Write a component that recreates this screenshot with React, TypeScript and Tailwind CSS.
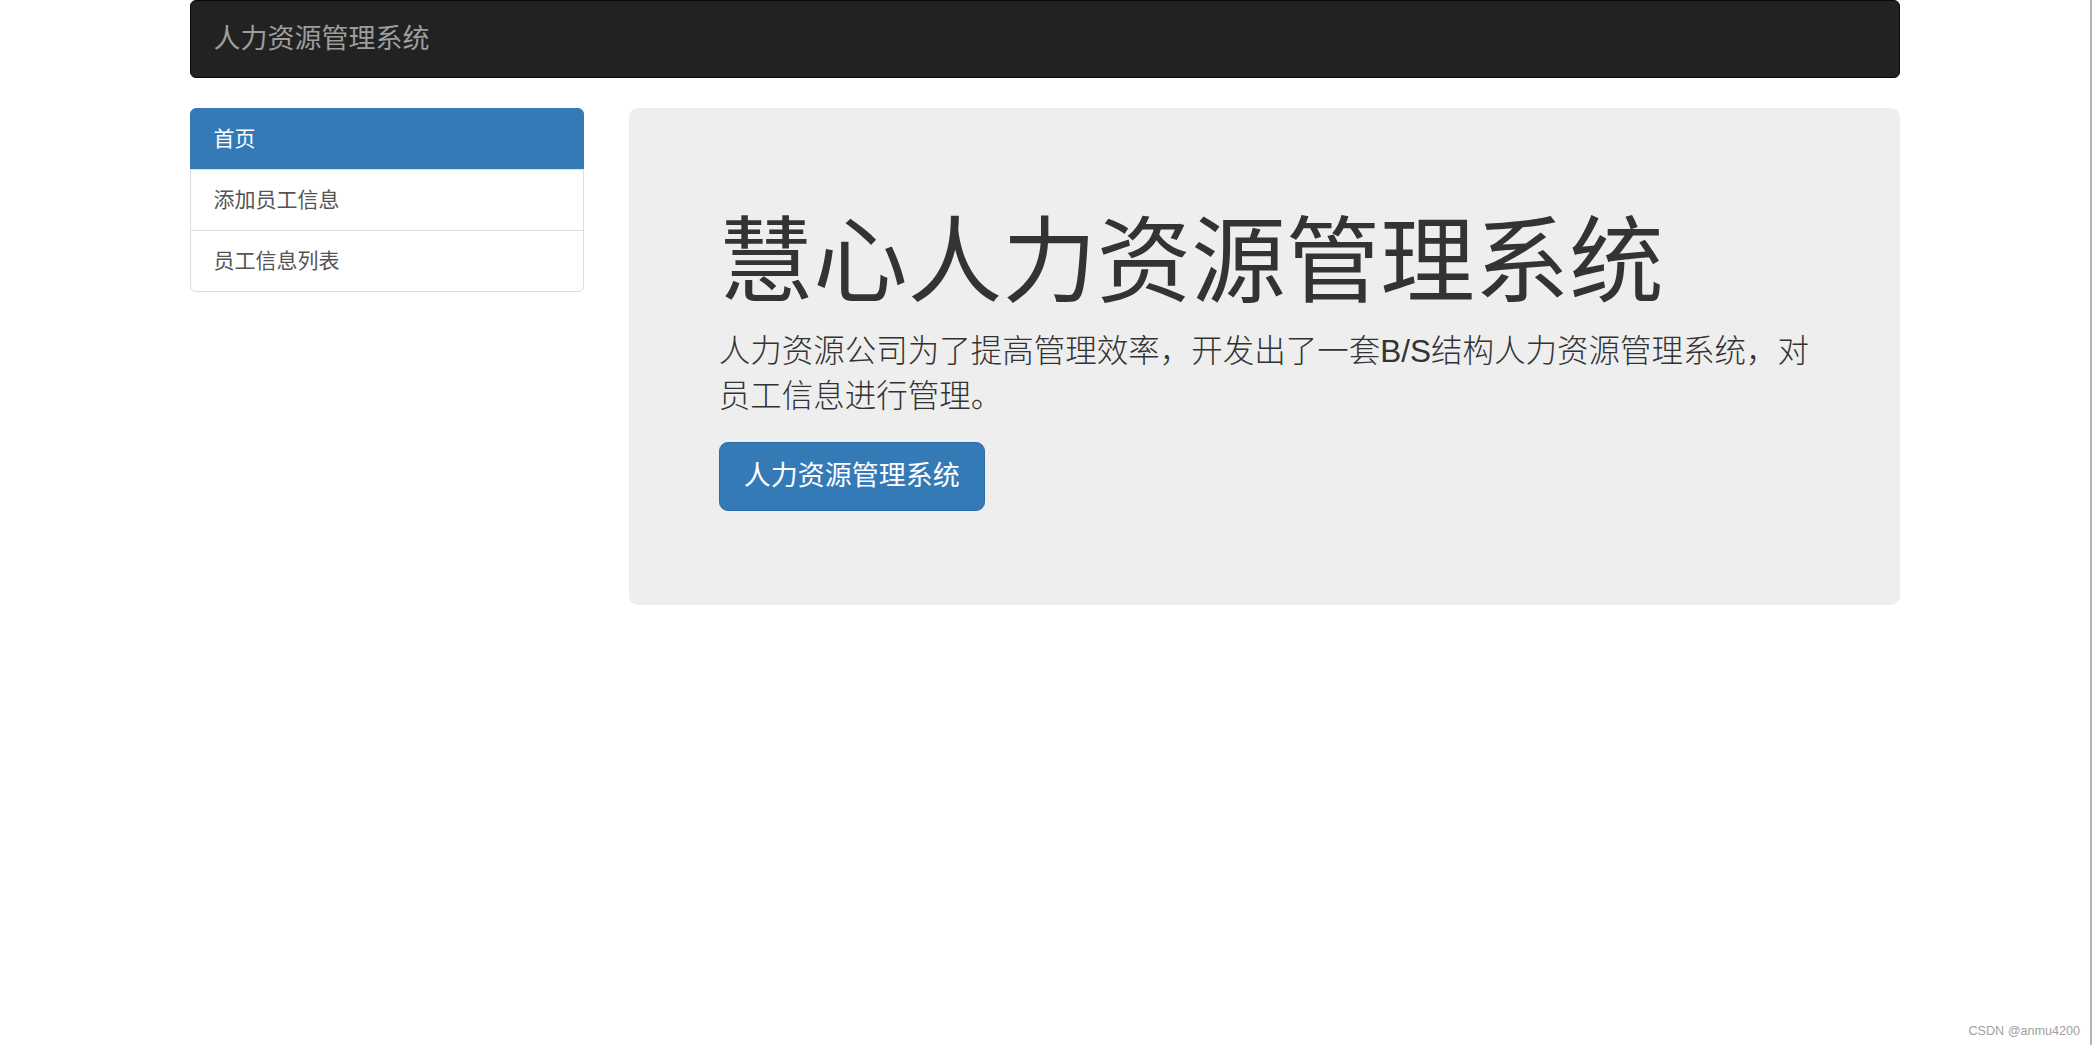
import React from "react";

const menu = [
  { label: "首页", active: true },
  { label: "添加员工信息", active: false },
  { label: "员工信息列表", active: false },
];

/**
 * 首页：顶部导航 + 左侧菜单 + 右侧 jumbotron
 */
const App = () => {
  return (
    <div className="relative flex min-h-[1045px] bg-white text-[#333] font-['Liberation_Sans','Noto_Sans_CJK_SC',sans-serif]">
      <div className="w-[2090px] shrink-0">
        <div className="mx-auto w-[1755px] px-[22.5px]">
          <nav className="flex items-center h-[78px] mb-[30px] px-[22.5px] bg-[#222] border-[1.5px] border-[#080808] rounded-[6px]">
            <span className="text-[27px] leading-[30px] text-[#9d9d9d]">人力资源管理系统</span>
          </nav>

          <div className="flex items-start gap-[45px]">
            <aside className="w-[393.75px] shrink-0 flex flex-col">
              {menu.map((item, i) => (
                <a
                  key={item.label}
                  className={
                    "block px-[22.5px] py-[15px] text-[21px] leading-[30px] border " +
                    (i > 0 ? "-mt-px " : "") +
                    (i === 0 ? "rounded-t-[6px] " : "") +
                    (i === menu.length - 1 ? "rounded-b-[6px] " : "") +
                    (item.active
                      ? "bg-[#337ab7] border-[#337ab7] text-white"
                      : "bg-white border-[#ddd] text-[#555]")
                  }
                >
                  {item.label}
                </a>
              ))}
            </aside>

            <main className="flex-1 bg-[#eee] rounded-[9px] px-[90px] py-[72px]">
              <h1 className="mt-[30px] mb-[15px] text-[94.5px] leading-[104px] font-normal text-[#333]">
                慧心人力资源管理系统
              </h1>
              <p className="mb-[22.5px] text-[31.5px] leading-[45px] font-light text-[#333]">
                人力资源公司为了提高管理效率，开发出了一套B/S结构人力资源管理系统，对
                <br />
                员工信息进行管理。
              </p>
              <div className="mb-[22.5px]">
                <a className="inline-flex items-center h-[69px] px-[24px] bg-[#337ab7] border-[1.5px] border-[#2e6da4] rounded-[9px] text-white text-[27px] leading-[36px]">
                  人力资源管理系统
                </a>
              </div>
            </main>
          </div>
        </div>
      </div>
      <div className="w-[1.5px] bg-[#b4b4b4]" />

      <span className="absolute right-[15px] bottom-[6px] text-[12.6px] leading-[15px] text-[#a0a0a0]">
        CSDN @anmu4200
      </span>
    </div>
  );
};

export default App;
